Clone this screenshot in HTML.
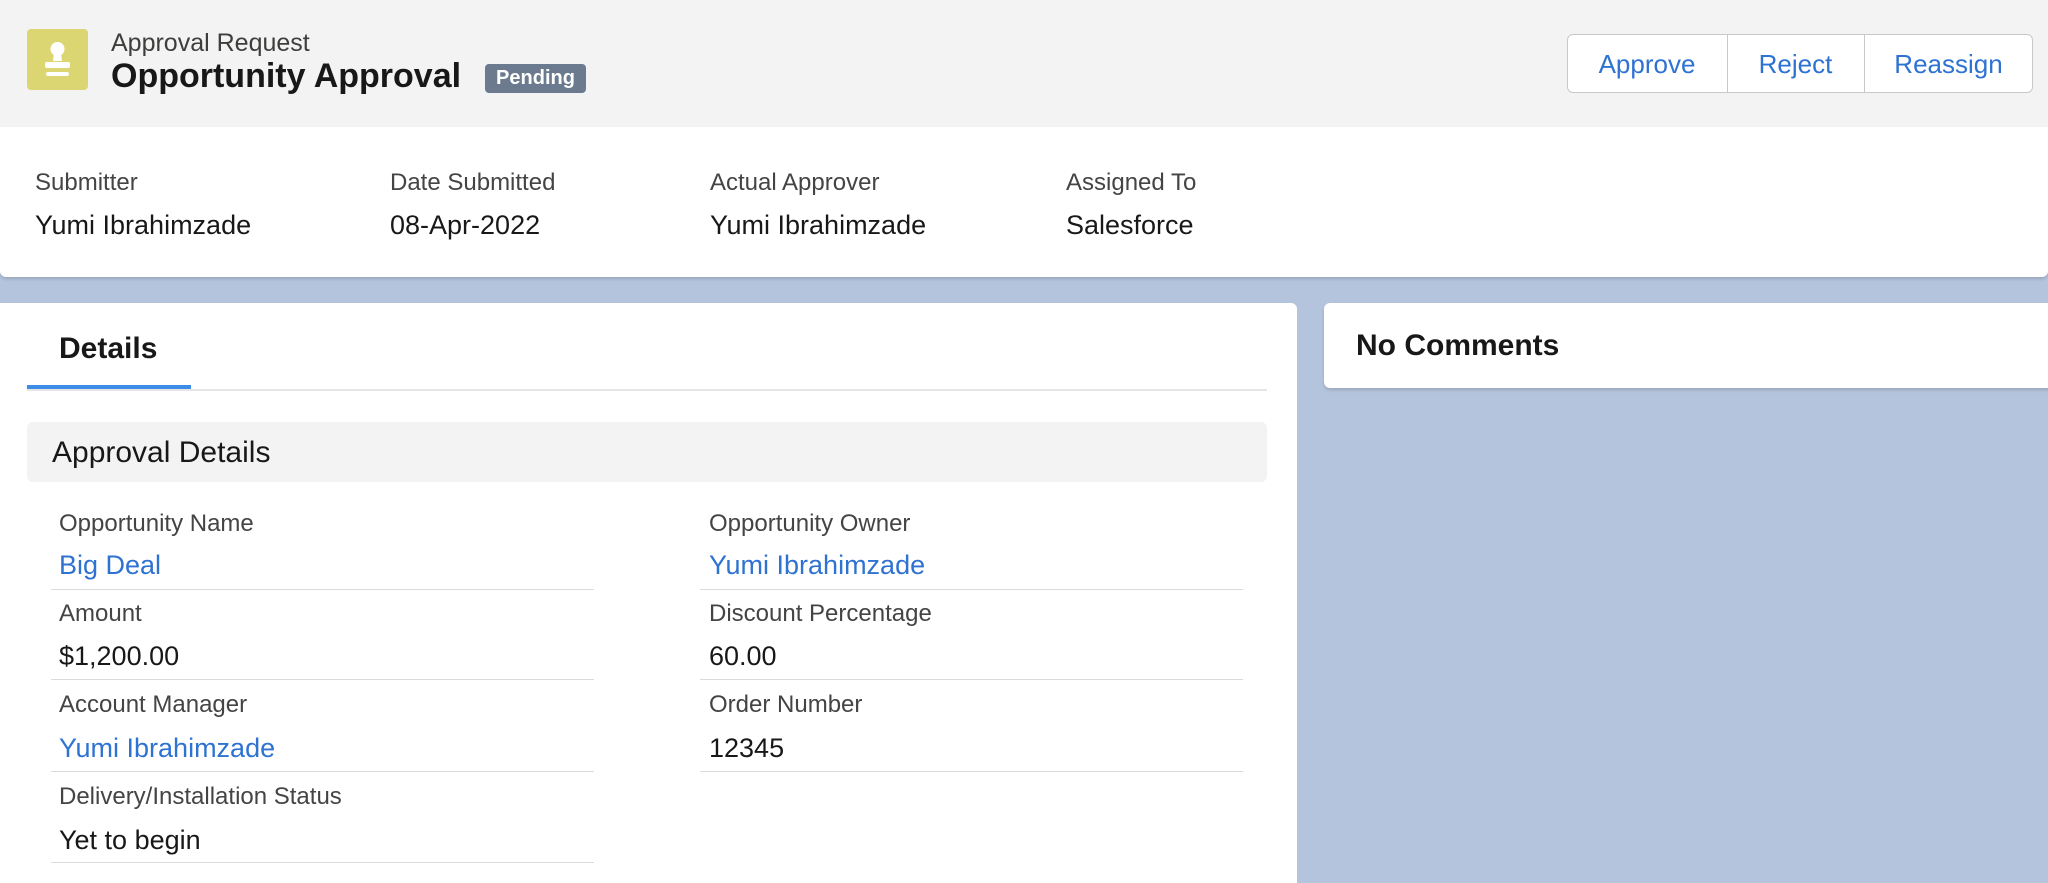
<!DOCTYPE html>
<html><head><meta charset="utf-8"><style>
*{margin:0;padding:0;box-sizing:border-box}
body{width:2048px;height:872px;overflow:hidden;background:#b4c4dd;font-family:"Liberation Sans",sans-serif;position:relative;color:#181818}
.a{position:absolute;white-space:nowrap}
.t{position:absolute;white-space:nowrap;line-height:40px;transform:translateY(-20px)}
.hdr{position:absolute;left:0;top:0;width:2048px;height:127px;background:#f3f3f3}
.band{position:absolute;left:0;top:127px;width:2048px;height:150px;background:#fff;box-shadow:0 2px 3px rgba(0,0,0,.15);border-radius:0 0 6px 6px}
.lbl{font-size:24px;color:#444}
.val{font-size:27px;color:#181818}
.lnk{font-size:27px;color:#2e72d2}
.line{position:absolute;height:1px;background:#dddbda}
</style></head><body>
<div class="hdr"></div>
<div class="a" style="left:27px;top:29px;width:61px;height:61px;background:#dbd672;border-radius:4px">
<svg width="61" height="61" viewBox="0 0 61 61"><circle cx="30.5" cy="20" r="7" fill="#fff"/><path d="M27 24h7l1 8h-9z" fill="#fff"/><rect x="18" y="33" width="25" height="6" rx="2" fill="#fff"/><rect x="19" y="43" width="23" height="4" rx="2" fill="#fff"/></svg></div>
<div class="t" style="left:111px;top:43px;font-size:25px;color:#3e3e3c">Approval Request</div>
<div class="t" style="left:111px;top:76px;font-size:34px;font-weight:bold">Opportunity Approval</div>
<div class="a" style="left:485px;top:64px;width:101px;height:29px;background:#6b7a8f;border-radius:4px;color:#fff;font-weight:bold;font-size:20px;line-height:29px;text-align:center">Pending</div>
<div class="a" style="left:1567px;top:34px;width:466px;height:59px;background:#fff;border:1px solid #c9c9c9;border-radius:6px"></div>
<div class="a" style="left:1727px;top:34px;width:1px;height:59px;background:#c9c9c9"></div>
<div class="a" style="left:1864px;top:34px;width:1px;height:59px;background:#c9c9c9"></div>
<div class="t" style="left:1567px;width:160px;text-align:center;top:64px;font-size:26px;color:#2e72d2">Approve</div>
<div class="t" style="left:1727px;width:137px;text-align:center;top:64px;font-size:26px;color:#2e72d2">Reject</div>
<div class="t" style="left:1864px;width:169px;text-align:center;top:64px;font-size:26px;color:#2e72d2">Reassign</div>
<div class="band"></div>
<div class="t lbl" style="left:35px;top:183px">Submitter</div>
<div class="t val" style="left:35px;top:225px">Yumi Ibrahimzade</div>
<div class="t lbl" style="left:390px;top:183px">Date Submitted</div>
<div class="t val" style="left:390px;top:225px">08-Apr-2022</div>
<div class="t lbl" style="left:710px;top:183px">Actual Approver</div>
<div class="t val" style="left:710px;top:225px">Yumi Ibrahimzade</div>
<div class="t lbl" style="left:1066px;top:183px">Assigned To</div>
<div class="t val" style="left:1066px;top:225px">Salesforce</div>
<div class="a" style="left:0;top:303px;width:1297px;height:580px;background:#fff;border-radius:0 6px 0 0"></div>
<div class="a" style="left:1324px;top:303px;width:740px;height:85px;background:#fff;border-radius:6px;box-shadow:0 2px 3px rgba(0,0,0,.15)"></div>
<div class="t" style="left:1356px;top:346px;font-size:30px;font-weight:bold">No Comments</div>
<div class="t" style="left:59px;top:349px;font-size:30px;font-weight:bold">Details</div>
<div class="a" style="left:27px;top:389px;width:1240px;height:2px;background:#e5e5e5"></div>
<div class="a" style="left:27px;top:385px;width:164px;height:4px;background:#3c8ce8"></div>
<div class="a" style="left:27px;top:422px;width:1240px;height:60px;background:#f3f3f3;border-radius:6px"></div>
<div class="t" style="left:52px;top:453px;font-size:30px">Approval Details</div>
<div class="t lbl" style="left:59px;top:524px">Opportunity Name</div>
<div class="t lnk" style="left:59px;top:565px">Big Deal</div>
<div class="line" style="left:51px;top:589px;width:543px"></div>
<div class="t lbl" style="left:59px;top:614px">Amount</div>
<div class="t val" style="left:59px;top:656px">$1,200.00</div>
<div class="line" style="left:51px;top:679px;width:543px"></div>
<div class="t lbl" style="left:59px;top:705px">Account Manager</div>
<div class="t lnk" style="left:59px;top:748px">Yumi Ibrahimzade</div>
<div class="line" style="left:51px;top:771px;width:543px"></div>
<div class="t lbl" style="left:59px;top:797px">Delivery/Installation Status</div>
<div class="t val" style="left:59px;top:840px">Yet to begin</div>
<div class="line" style="left:51px;top:862px;width:543px"></div>
<div class="t lbl" style="left:709px;top:524px">Opportunity Owner</div>
<div class="t lnk" style="left:709px;top:565px">Yumi Ibrahimzade</div>
<div class="line" style="left:700px;top:589px;width:543px"></div>
<div class="t lbl" style="left:709px;top:614px">Discount Percentage</div>
<div class="t val" style="left:709px;top:656px">60.00</div>
<div class="line" style="left:700px;top:679px;width:543px"></div>
<div class="t lbl" style="left:709px;top:705px">Order Number</div>
<div class="t val" style="left:709px;top:748px">12345</div>
<div class="line" style="left:700px;top:771px;width:543px"></div>
</body></html>
